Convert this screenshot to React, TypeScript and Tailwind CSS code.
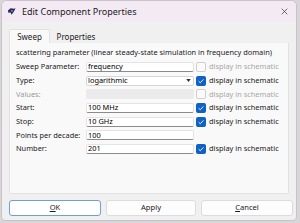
import React from 'react';

const font = { fontFamily: '"Noto Sans", "Open Sans", sans-serif' };

type RowProps = {
  label: string;
  value?: string;
  disabled?: boolean;
  combo?: boolean;
  check?: 'on' | 'off' | 'none';
};

const Check: React.FC<{ on: boolean }> = ({ on }) =>
  on ? (
    <span className="flex h-[10px] w-[10px] items-center justify-center rounded-[2px] bg-[#0f62c4]">
      <svg viewBox="0 0 10 10" className="h-[8px] w-[8px]">
        <path d="M2 5.2 L4.1 7.2 L8 3" fill="none" stroke="#fff" strokeWidth="1.1" />
      </svg>
    </span>
  ) : (
    <span className="h-[10px] w-[10px] rounded-[2px] border border-[#cfcfcf] bg-[#fbfbfb]" />
  );

const Row: React.FC<RowProps> = ({ label, value = '', disabled, combo, check = 'none' }) => (
  <div className="flex h-[13.7px] items-center">
    <div className={`w-[70px] shrink-0 ${disabled ? 'text-[#9a9a9a]' : 'text-[#1b1b1b]'}`}>{label}</div>
    {combo ? (
      <div className="flex h-[10px] w-[108px] items-center justify-between rounded-[2px] border border-[#d6d6d6] bg-white pl-[1px] pr-[2px]">
        <span>{value}</span>
        <svg viewBox="0 0 6 4" className="h-[3px] w-[5px]">
          <path d="M0 0 L6 0 L3 4 Z" fill="#333" />
        </svg>
      </div>
    ) : disabled ? (
      <div className="h-[10px] w-[108px] rounded-[2px] bg-[#ebebeb]" />
    ) : (
      <div className="flex h-[10px] w-[108px] items-center rounded-[2px] border border-b-[#8b8b8b] border-[#e3e3e3] bg-white pl-[1px]">
        {value}
      </div>
    )}
    {check !== 'none' && (
      <div className="ml-[2px] flex items-center gap-[3px]">
        <Check on={check === 'on'} />
        <span className={check === 'on' ? 'text-[#1b1b1b]' : 'text-[#a8a8a8]'}>display in schematic</span>
      </div>
    )}
  </div>
);

export default function App() {
  return (
    <div className="h-[223px] w-[300px] overflow-hidden bg-[#d9d6d9] pl-[1px]" style={font}>
      <div className="flex h-[221px] w-[296px] flex-col overflow-hidden rounded-t-[6px] rounded-b-[4px] border border-[#c9c4c9] bg-[#f0f0f0] text-[7.4px] leading-none">
        {/* title bar */}
        <div className="flex h-[21px] shrink-0 items-center bg-[#f4eaf4] pl-[5px] pr-[8px]">
          <svg viewBox="0 0 10 10" className="h-[9px] w-[9px]">
            <path d="M1 4 L4 1.5 L8 2 L9.5 1 L8.5 3.5 L7 6 L5 8.5 L4 6 L1.5 6.5 Z" fill="#2b2e5a" />
            <circle cx="5.5" cy="4.3" r="1" fill="#8aa0d8" />
          </svg>
          <span className="ml-[6px] text-[9px] text-[#1b1b1b]">Edit Component Properties</span>
          <svg viewBox="0 0 10 10" className="ml-auto h-[7px] w-[7px]">
            <path d="M1 1 L9 9 M9 1 L1 9" stroke="#333" strokeWidth="1" />
          </svg>
        </div>

        {/* tabs */}
        <div className="mt-[7px] flex h-[14px] shrink-0 items-end pl-[7px]">
          <div className="flex h-[14px] w-[41px] items-center justify-center rounded-t-[2px] border border-b-0 border-[#e2e2e2] bg-[#f9f9f9] text-[8px] text-[#1b1b1b]">
            Sweep
          </div>
          <div className="flex h-[13px] w-[52px] items-center justify-center text-[8px] text-[#1b1b1b]">Properties</div>
        </div>

        {/* panel */}
        <div className="mx-[7px] flex h-[151px] shrink-0 flex-col rounded-b-[2px] border border-t-0 border-[#e2e2e2] bg-[#f9f9f9] pl-[6px] pt-[6px]">
          <div className="h-[11px] text-[#1b1b1b]">scattering parameter (linear steady-state simulation in frequency domain)</div>
          <Row label="Sweep Parameter:" value="frequency" check="off" />
          <Row label="Type:" value="logarithmic" combo check="on" />
          <Row label="Values:" disabled check="off" />
          <Row label="Start:" value="100 MHz" check="on" />
          <Row label="Stop:" value="10 GHz" check="on" />
          <Row label="Points per decade:" value="100" />
          <Row label="Number:" value="201" check="on" />
        </div>

        {/* buttons */}
        <div className="mt-[6px] flex gap-[5px] pl-[7px] text-[7.6px] text-[#1b1b1b]">
          <button className="flex h-[16px] w-[92px] items-center justify-center rounded-[3px] border border-[#6d9fd8] bg-white">
            <span className="underline underline-offset-1">O</span>K
          </button>
          <button className="flex h-[16px] w-[90px] items-center justify-center rounded-[3px] border border-[#dcdcdc] bg-[#fdfdfd]">
            Apply
          </button>
          <button className="flex h-[16px] w-[92px] items-center justify-center rounded-[3px] border border-[#dcdcdc] bg-[#fdfdfd]">
            <span className="underline underline-offset-1">C</span>ancel
          </button>
        </div>
      </div>
    </div>
  );
}
